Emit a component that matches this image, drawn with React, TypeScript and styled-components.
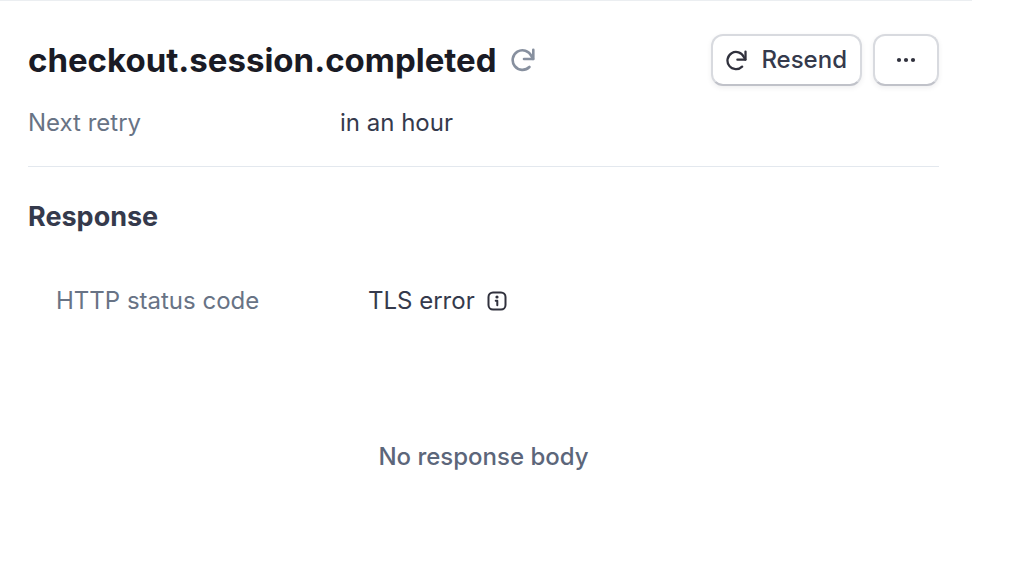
import React from "react";
import styled, { createGlobalStyle } from "styled-components";

const GlobalStyle = createGlobalStyle`
  *, *::before, *::after { box-sizing: border-box; }
  body {
    margin: 0;
    background: #ffffff;
    color: #353a4c;
    font-family: Inter, "Liberation Sans", sans-serif;
    font-size: 24px;
    line-height: 32px;
  }
`;

const Panel = styled.main`
  margin-right: 52px;
  padding: 33px 33px 32px 28px;
  border-top: 1px solid #ebeef1;
`;

const Header = styled.header`
  display: flex;
  align-items: center;
  justify-content: space-between;
  gap: 12px;
`;

const TitleGroup = styled.div`
  display: flex;
  align-items: center;
  gap: 14px;
`;

const Title = styled.h1`
  margin: 0;
  color: #1a1b25;
  font-size: 33px;
  line-height: 44px;
  font-weight: 700;
`;

const Actions = styled.div`
  display: flex;
  gap: 11px;
`;

const Button = styled.button<{ $compact?: boolean }>`
  display: inline-flex;
  align-items: center;
  justify-content: center;
  gap: 14px;
  height: 52px;
  padding: 0 ${(p) => (p.$compact ? 21 : 13)}px;
  border: 2px solid #d8dadf;
  border-bottom-color: #c0c2c9;
  border-radius: 12px;
  background: #ffffff;
  box-shadow: 0 2px 5px rgba(48, 49, 61, 0.08);
  color: #353a4c;
  font: inherit;
  font-weight: 500;
  cursor: pointer;
`;

const Icon = styled.svg<{ $muted?: boolean }>`
  display: block;
  flex: none;
  color: ${(p) => (p.$muted ? "#87909f" : "#30313d")};
`;

const Details = styled.dl<{ $inset?: boolean }>`
  display: grid;
  grid-template-columns: 312px 1fr;
  margin: 0;
  padding: ${(p) => (p.$inset ? "52px 28px 0" : "21px 0 27px")};
`;

const Term = styled.dt`
  color: #687385;
`;

const Value = styled.dd`
  display: flex;
  align-items: center;
  gap: 12px;
  margin: 0;
`;

const Response = styled.section`
  padding-top: 34px;
  border-top: 1px solid #e3e8ee;
`;

const SectionTitle = styled.h2`
  margin: 0;
  font-size: 27px;
  line-height: 32px;
  font-weight: 700;
`;

const EmptyBody = styled.p`
  margin: 0;
  padding: 124px 0 64px;
  color: #5c667a;
  font-weight: 500;
  text-align: center;
`;

function RetryIcon({ size, muted }: { size: number; muted?: boolean }) {
  return (
    <Icon $muted={muted} width={size} height={size} viewBox="0 0 24 24" fill="none"
      stroke="currentColor" strokeWidth="2.6" strokeLinecap="round" strokeLinejoin="round" aria-hidden="true">
      <path d="M22.3 1.8V11H13" />
      <path d="M22 10.8L20.4 8A9.8 9.8 0 1 0 18.4 19" />
    </Icon>
  );
}

function MoreIcon() {
  return (
    <Icon width="20" height="6" viewBox="0 0 20 6" fill="currentColor" aria-hidden="true">
      <circle cx="3" cy="3" r="2.1" />
      <circle cx="10" cy="3" r="2.1" />
      <circle cx="17" cy="3" r="2.1" />
    </Icon>
  );
}

function InfoIcon() {
  return (
    <Icon width="20" height="20" viewBox="0 0 20 20" fill="none" stroke="currentColor"
      strokeWidth="2" strokeLinecap="round" strokeLinejoin="round" role="img" aria-label="More information">
      <rect x="1.5" y="1.5" width="17" height="17" rx="4.5" />
      <circle cx="10" cy="6" r="1.6" fill="currentColor" stroke="none" />
      <path d="M8.7 9.7H10.3V14.2" />
    </Icon>
  );
}

export default function App() {
  return (
    <>
      <GlobalStyle />
      <Panel>
        <Header>
          <TitleGroup>
            <Title>checkout.session.completed</Title>
            <RetryIcon size={24} muted />
          </TitleGroup>
          <Actions>
            <Button type="button">
              <RetryIcon size={21} />
              Resend
            </Button>
            <Button type="button" $compact aria-label="More actions">
              <MoreIcon />
            </Button>
          </Actions>
        </Header>
        <Details>
          <Term>Next retry</Term>
          <Value>in an hour</Value>
        </Details>
        <Response>
          <SectionTitle>Response</SectionTitle>
          <Details $inset>
            <Term>HTTP status code</Term>
            <Value>
              TLS error
              <InfoIcon />
            </Value>
          </Details>
          <EmptyBody>No response body</EmptyBody>
        </Response>
      </Panel>
    </>
  );
}
